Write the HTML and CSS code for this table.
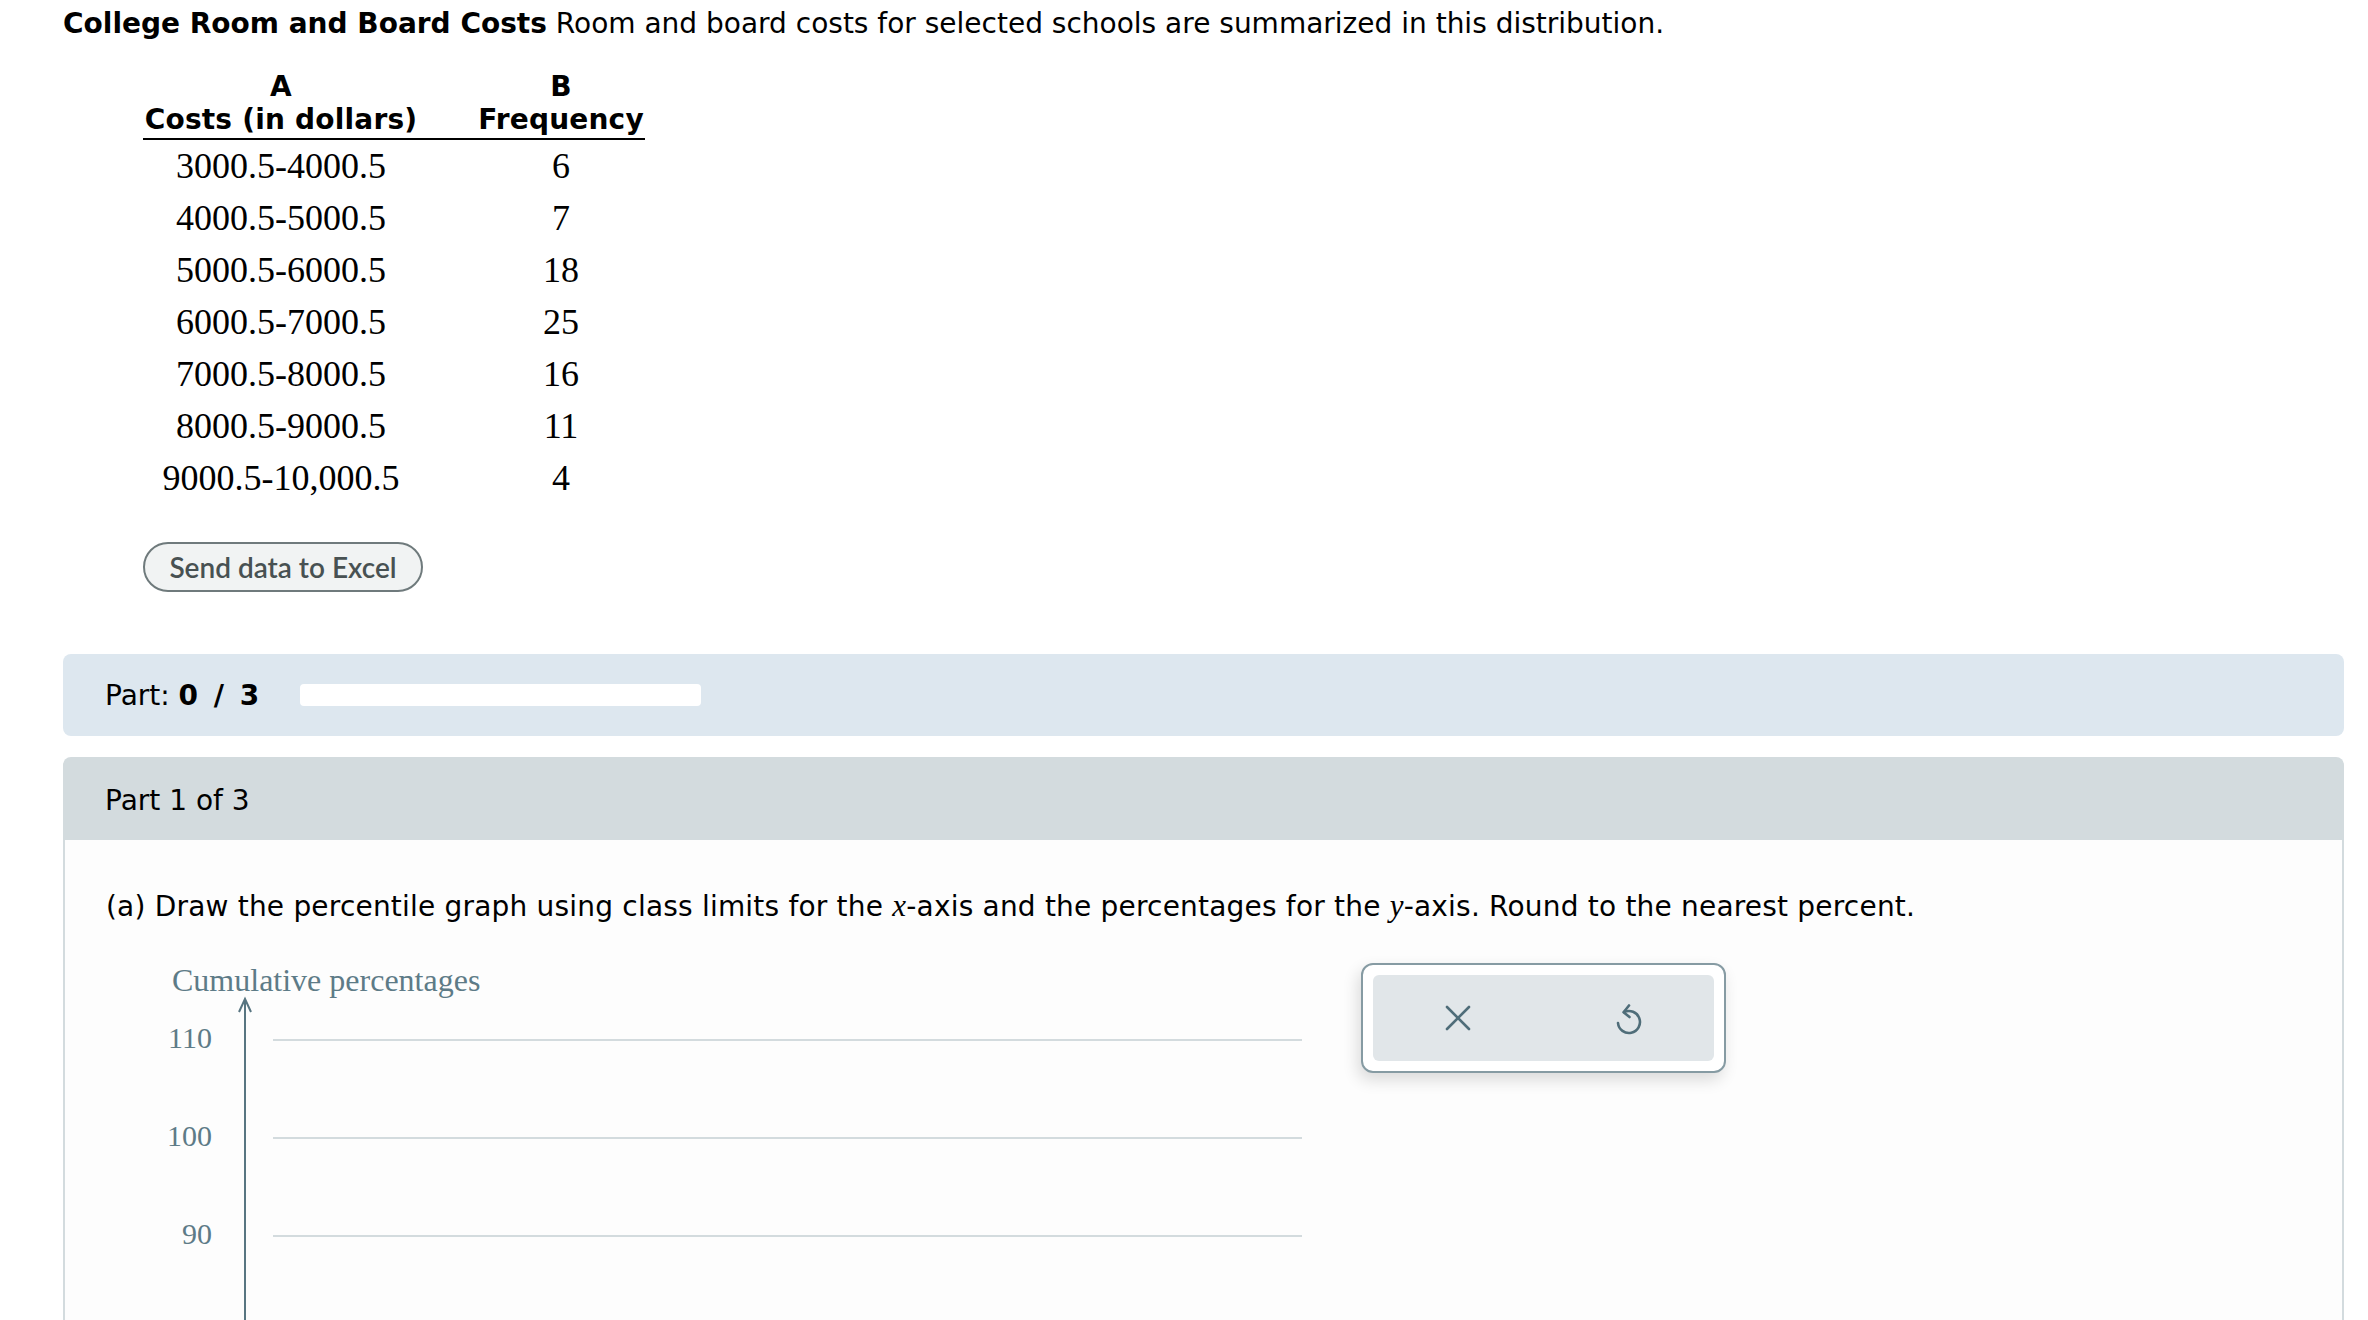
FILE: index.html
```html
<!DOCTYPE html>
<html>
<head>
<meta charset="utf-8">
<link rel="stylesheet" href="styles.css">
</head>
<body>
<div class="page">
  <p class="intro"><b>College Room and Board Costs</b> Room and board costs for selected schools are summarized in this distribution.</p>

  <div class="dtable">
    <div class="thead">
      <div class="th">A<br>Costs (in dollars)</div>
      <div class="th">B<br>Frequency</div>
    </div>
    <div class="trow"><div>3000.5-4000.5</div><div>6</div></div>
    <div class="trow"><div>4000.5-5000.5</div><div>7</div></div>
    <div class="trow"><div>5000.5-6000.5</div><div>18</div></div>
    <div class="trow"><div>6000.5-7000.5</div><div>25</div></div>
    <div class="trow"><div>7000.5-8000.5</div><div>16</div></div>
    <div class="trow"><div>8000.5-9000.5</div><div>11</div></div>
    <div class="trow"><div>9000.5-10,000.5</div><div>4</div></div>
  </div>

  <button class="excel">Send data to Excel</button>

  <div class="partbar">
    <span class="partlabel">Part: <b>0 / 3</b></span>
    <div class="progress"></div>
  </div>

  <div class="part">
    <div class="part-head">Part 1 of 3</div>
    <div class="part-body">
      <p class="question">(a) Draw the percentile graph using class limits for the <i class="var">x</i>-axis and the percentages for the <i class="var">y</i>-axis. Round to the nearest percent.</p>
      <div class="graph-row">
        <svg class="graph" width="1214" height="420" viewBox="0 0 1214 420">
          <text class="axis-title" x="66" y="40">Cumulative percentages</text>
          <line class="grid" x1="167" y1="89" x2="1196" y2="89"/>
          <line class="grid" x1="167" y1="187" x2="1196" y2="187"/>
          <line class="grid" x1="167" y1="285" x2="1196" y2="285"/>
          <text class="tick" x="106" y="97">110</text>
          <text class="tick" x="106" y="195">100</text>
          <text class="tick" x="106" y="293">90</text>
          <line class="axis" x1="139" y1="48" x2="139" y2="420"/>
          <polyline class="axis" points="133,61 139,48 145,61"/>
        </svg>
        <div class="toolbox">
          <div class="tools">
            <button class="tool" aria-label="Clear">
              <svg width="26" height="26" viewBox="0 0 26 26"><path d="M2 2 L24 24 M24 2 L2 24"/></svg>
            </button>
            <button class="tool" aria-label="Undo">
              <svg width="28" height="34" viewBox="0 0 28 34"><path d="M9 11.2 A11 11 0 1 1 3 22"/><path d="M14 4.5 L8.6 11.2 L14.5 16"/></svg>
            </button>
          </div>
        </div>
      </div>
    </div>
  </div>
</div>
</body>
</html>
```

FILE: styles.css
```css
html, body {
  margin: 0;
  padding: 0;
  background: #ffffff;
}

.page {
  padding: 0 24px 0 63px;
  font-family: "DejaVu Sans", Verdana, sans-serif;
  font-size: 28px;
  color: #000;
}

.intro {
  margin: 8px 0 0;
  line-height: 32px;
}

.dtable {
  margin: 30px 0 0 80px;
  display: inline-block;
}

.thead, .trow {
  display: grid;
  grid-template-columns: 276px 168px;
  column-gap: 58px;
  text-align: center;
}

.thead {
  border-bottom: 2px solid #000;
  padding-bottom: 2px;
  font-weight: bold;
  font-size: 28px;
  letter-spacing: 0.2px;
  line-height: 33px;
}

.trow {
  font-family: "Liberation Serif", "Times New Roman", serif;
  font-size: 36px;
  height: 52px;
  line-height: 52px;
}

.excel {
  display: block;
  margin: 38px 0 0 80px;
  width: 280px;
  height: 50px;
  border: 2px solid #6f7a7c;
  border-radius: 25px;
  background: #f1f3f3;
  color: #485152;
  font-family: Lato, "Open Sans", sans-serif;
  font-weight: 600;
  font-size: 28px;
  padding: 0;
}

.partbar {
  margin-top: 62px;
  height: 82px;
  box-sizing: border-box;
  padding-top: 2px;
  background: #dde7ef;
  border-radius: 8px;
  display: flex;
  align-items: center;
  padding-left: 42px;
}

.partlabel {
  flex: none;
  width: 195px;
  line-height: 36px;
}

.partlabel b {
  word-spacing: 6px;
}

.progress {
  width: 401px;
  height: 22px;
  margin-top: -2px;
  background: #ffffff;
  border-radius: 4px;
}

.part {
  margin-top: 21px;
}

.part-head {
  height: 83px;
  box-sizing: border-box;
  padding-top: 3px;
  background: #d3dbde;
  border-radius: 8px 8px 0 0;
  display: flex;
  align-items: center;
  padding-left: 42px;
}

.part-body {
  border-left: 2px solid #d3dbde;
  border-right: 2px solid #d3dbde;
  background: #fdfdfd;
  padding: 48px 0 0 41px;
  min-height: 600px;
}

.question {
  margin: 0;
  line-height: 36px;
  letter-spacing: 0.2px;
}

.var {
  font-family: "Liberation Serif", "Times New Roman", serif;
  font-size: 31px;
}

.graph-row {
  margin-top: 26px;
  display: flex;
  align-items: flex-start;
}

.graph {
  display: block;
  flex: none;
}

.axis-title {
  font-family: "Liberation Serif", "Times New Roman", serif;
  font-size: 32px;
  fill: #5d7b87;
}

.tick {
  font-family: "Liberation Serif", "Times New Roman", serif;
  font-size: 30px;
  fill: #5d7b87;
  text-anchor: end;
}

.grid {
  stroke: #d3dbde;
  stroke-width: 2;
}

.axis {
  stroke: #587581;
  stroke-width: 2;
  fill: none;
}

.toolbox {
  margin: 12px 0 0 41px;
  width: 365px;
  height: 110px;
  box-sizing: border-box;
  border: 2px solid #869ba3;
  border-radius: 12px;
  background: #ffffff;
  padding: 10px;
  box-shadow: -3px 7px 16px rgba(0, 0, 0, 0.14);
}

.tools {
  display: flex;
  height: 100%;
  background: #e1e6e9;
  border-radius: 6px;
}

.tool {
  flex: 1;
  border: 0;
  background: transparent;
  display: flex;
  align-items: center;
  justify-content: center;
  padding: 0;
}

.tool svg path {
  fill: none;
  stroke: #4f6d79;
  stroke-width: 2.6;
  stroke-linecap: round;
  stroke-linejoin: round;
}
```
